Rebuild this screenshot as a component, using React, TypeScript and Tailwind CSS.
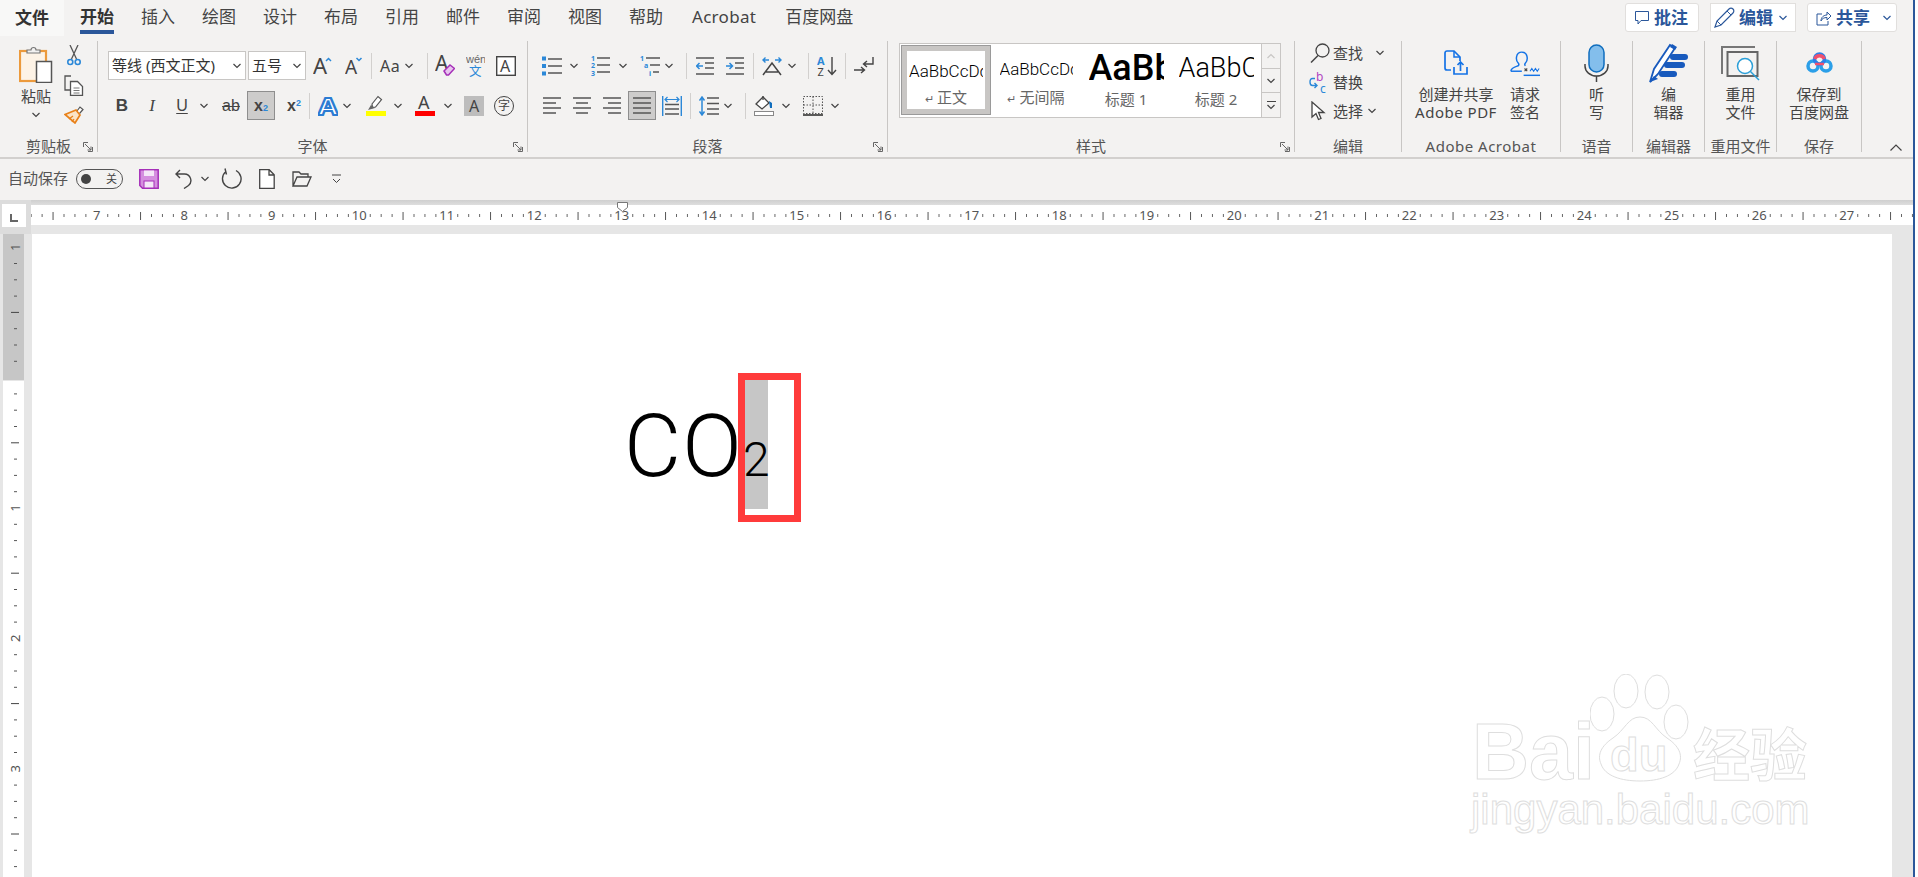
import type { ReactNode } from 'react';

const TEXT = '#444444';
const BLUE = '#2b88d8';
const GLYPH = "'Noto Sans','Noto Sans CJK SC',sans-serif";

// ---- small pieces ----

function Chev({ className = '', color = TEXT }: { className?: string; color?: string }) {
  return (
    <svg width="10" height="6" viewBox="0 0 10 6" className={`shrink-0 ${className}`}>
      <path d="M1.5 1l3.5 3.5L8.500 1" fill="none" stroke={color} strokeWidth="1.2" />
    </svg>
  );
}

function Sep({ className = '' }: { className?: string }) {
  return <div className={`h-[26px] w-px shrink-0 bg-[#d2d0ce] ${className}`} />;
}

function Launcher() {
  return (
    <svg width="10" height="10" viewBox="0 0 10 10" className="absolute bottom-[0px] right-[4px]">
      <path d="M9.500 5v4.500H5M.5 5V.5H5M2 2l6 6M8 4.500V8H4.500" fill="none" stroke="#666" strokeWidth="1" />
    </svg>
  );
}

function Group({ label, className, launcher, children }: { label: string; className: string; launcher?: boolean; children: ReactNode }) {
  return (
    <div className={`relative flex h-[111px] shrink-0 flex-col border-r border-[#c8c6c4] ${className}`}>
      <div className="h-[95px] shrink-0">{children}</div>
      <div className={`h-[20px] whitespace-nowrap text-center text-[15px] leading-[20px] text-[#555] ${label === 'Adobe Acrobat' ? 'tracking-[0.5px]' : ''}`}>{label}</div>
      {launcher && <Launcher />}
    </div>
  );
}

function Tab({ label, active, className = '', textClass = '' }: { label: string; active?: boolean; className?: string; textClass?: string }) {
  return (
    <div className={`flex h-[36px] flex-col px-[13.5px] ${className}`}>
      <div className={`h-[30px] pt-[3px] text-[17px] leading-[27px] ${active ? 'font-bold text-[#333]' : 'text-[#444]'} ${textClass}`}>{label}</div>
      <div className={`h-[4px] ${active ? 'bg-[#2b579a]' : ''}`} />
    </div>
  );
}

function Big({ icon, lines, className = '' }: { icon: ReactNode; lines: string[]; className?: string }) {
  return (
    <div className={`flex flex-col items-center ${className}`}>
      <div className="flex h-[44px] w-full items-center justify-center">{icon}</div>
      {lines.map((l) => (
        <div key={l} className={`whitespace-nowrap text-[15px] leading-[18px] text-[#444] ${l === 'Adobe PDF' ? 'tracking-[0.5px]' : ''}`}>{l}</div>
      ))}
    </div>
  );
}

function Lines({ x, w = 12 }: { x: number; w?: number }) {
  return <path d={`M${x} 3H${x + w}M${x} 10H${x + w}M${x} 17H${x + w}`} stroke="#555" strokeWidth="1.5" />;
}

function StyleItem({ sample, label, mark, className, sampleClass }: { sample: string; label: string; mark?: boolean; className: string; sampleClass: string }) {
  return (
    <div className={`flex shrink-0 flex-col items-center ${className}`}>
      <div className={`overflow-hidden whitespace-nowrap font-['Roboto',sans-serif] text-black ${sampleClass}`}>{sample}</div>
      <div className="mt-[3px] whitespace-nowrap text-[15px] leading-[20px] text-[#666]">
        {mark && <span className="mr-[3px] text-[11px]">↵</span>}
        {label}
      </div>
    </div>
  );
}

// ---- ribbon icons ----

const PasteIcon = () => (
  <svg width="34" height="38" viewBox="0 0 34 38">
    <rect x="1" y="6" width="26" height="30" fill="#fdf3e6" stroke="#ec9a3c" strokeWidth="2.200" />
    <path d="M8 8V5h4a2.500 2.500 0 0 1 5 0h4v3z" fill="#f3f2f1" stroke="#777" strokeWidth="1.200" />
    <rect x="17.500" y="16.500" width="15" height="21" fill="#fff" stroke="#555" strokeWidth="1.500" />
  </svg>
);
const ScissorsIcon = () => (
  <svg width="14" height="21" viewBox="0 0 14 21">
    <path d="M3 0l6.500 14M11 0L4.500 14" stroke="#555" strokeWidth="1.300" fill="none" />
    <circle cx="3.300" cy="17" r="2.500" fill="none" stroke="#2b88d8" strokeWidth="1.600" />
    <circle cx="10.700" cy="17" r="2.500" fill="none" stroke="#2b88d8" strokeWidth="1.600" />
  </svg>
);
const CopyIcon = () => (
  <svg width="20" height="21" viewBox="0 0 20 21">
    <path d="M7 1H1v14h5" fill="none" stroke="#555" strokeWidth="1.300" />
    <path d="M6.500 6.500h7l5 5v9h-12z" fill="#fff" stroke="#555" strokeWidth="1.300" />
    <path d="M9.500 13h6M9.500 15.500h6M9.500 18h6" stroke="#777" strokeWidth="1" />
  </svg>
);
const PainterIcon = () => (
  <svg width="21" height="19" viewBox="0 0 21 19">
    <path d="M13 6l3-4 3 2.500-3.500 4" fill="#fff" stroke="#555" strokeWidth="1.200" />
    <path d="M1 9.500L12 5l4 5-5 8z" fill="#fbe3c5" stroke="#e8811a" strokeWidth="1.700" />
    <path d="M5 14l4-3M8 17l2-3" stroke="#e8811a" strokeWidth="1.300" />
  </svg>
);
const GrowIcon = ({ up }: { up: boolean }) => (
  <svg width={up ? 20 : 18} height="20" viewBox={up ? '0 0 20 20' : '0 0 18 20'}>
    <text x="0" y="18" fontSize={up ? 22 : 19} fontFamily={GLYPH} fill="#444">A</text>
    <path d={up ? 'M13 5l2.500-2.500L18 5' : 'M11.500 2l2.500 2.500L16.500 2'} fill="none" stroke={BLUE} strokeWidth="1.500" />
  </svg>
);
const ClearIcon = () => (
  <svg width="20" height="23" viewBox="0 0 20 23">
    <text x="0" y="17" fontSize="21" fontFamily={GLYPH} fill="#444">A</text>
    <path d="M9 17l6-6 4.500 3.500-6 6.500h-2z" fill="#e7c4ee" stroke="#a52fb8" strokeWidth="1.500" />
  </svg>
);
const WenIcon = () => (
  <svg width="19" height="22" viewBox="0 0 19 22">
    <text x="0" y="8" fontSize="11" fontFamily="'Liberation Sans',sans-serif" fill="#666">wén</text>
    <text x="3" y="21" fontSize="12.500" fontFamily="'Noto Sans CJK SC',sans-serif" fill={BLUE}>文</text>
  </svg>
);
const BoxAIcon = () => (
  <svg width="20" height="20" viewBox="0 0 20 20">
    <rect x=".7" y=".7" width="18.600" height="18.600" fill="#fff" stroke="#444" strokeWidth="1.400" />
    <text x="4" y="16" fontSize="16" fontFamily={GLYPH} fill="#444">A</text>
  </svg>
);
const TextEffectIcon = () => (
  <svg width="20" height="20" viewBox="0 0 20 20">
    <text x="0" y="18.500" fontSize="24" fontWeight="700" fontFamily={GLYPH} fill="#fff" stroke="#2b7cd3" strokeWidth="2" textLength="20" lengthAdjust="spacingAndGlyphs">A</text>
  </svg>
);
const HighlightIcon = () => (
  <svg width="20" height="21" viewBox="0 0 20 21">
    <path d="M6 9l6-7.500 3.500 3-6 7.500-3 .5z" fill="#fff" stroke="#555" strokeWidth="1.200" />
    <path d="M2 15l3-5 4 3z" fill="#666" />
    <rect x="0" y="16" width="20" height="5" fill="#ffff00" />
  </svg>
);
const FontColorIcon = () => (
  <svg width="20" height="21" viewBox="0 0 20 21">
    <text x="3" y="14" fontSize="18" fontFamily={GLYPH} fill="#444">A</text>
    <rect x="0" y="16" width="20" height="5" fill="#ff0000" />
  </svg>
);
const BulletIcon = () => (
  <svg width="20" height="20" viewBox="0 0 20 20">
    <rect x="0" y="0.500" width="4" height="4" fill={BLUE} />
    <rect x="0" y="8" width="4" height="4" fill={BLUE} />
    <rect x="0" y="15.500" width="4" height="4" fill={BLUE} />
    <Lines x={6} w={14} />
  </svg>
);
const NumberIcon = () => (
  <svg width="19" height="21" viewBox="0 0 19 21">
    <text x="0" y="6" fontSize="7" fontWeight="700" fontFamily={GLYPH} fill={BLUE}>1</text>
    <text x="0" y="13" fontSize="7" fontWeight="700" fontFamily={GLYPH} fill={BLUE}>2</text>
    <text x="0" y="20.500" fontSize="7" fontWeight="700" fontFamily={GLYPH} fill={BLUE}>3</text>
    <Lines x={6} w={13} />
  </svg>
);
const MultiIcon = () => (
  <svg width="20" height="21" viewBox="0 0 20 21">
    <text x="0" y="6" fontSize="7" fontWeight="700" fontFamily={GLYPH} fill={BLUE}>1</text>
    <text x="4" y="13" fontSize="7" fontWeight="700" fontFamily={GLYPH} fill={BLUE}>a</text>
    <text x="9" y="20.500" fontSize="7" fontWeight="700" fontFamily={GLYPH} fill={BLUE}>i</text>
    <path d="M6 3h14M10 10h10M13 17h6" stroke="#555" strokeWidth="1.500" />
  </svg>
);
const IndentIcon = ({ inc }: { inc: boolean }) => (
  <svg width="18" height="20" viewBox="0 0 18 20">
    <path d="M0 2h18M9 7h9M9 12h9M0 18h18" stroke="#555" strokeWidth="1.500" />
    {inc ? (
      <path d="M0 10h6M3.500 7l3 3-3 3" fill="none" stroke={BLUE} strokeWidth="1.500" />
    ) : (
      <path d="M7 10H1M3.500 7l-3 3 3 3" fill="none" stroke={BLUE} strokeWidth="1.500" />
    )}
  </svg>
);
const DirectionIcon = () => (
  <svg width="20" height="20" viewBox="0 0 20 20">
    <path d="M1 4h6M3.500 1.500L1 4l2.500 2.500M13 4h6M16.500 1.500L19 4l-2.500 2.500" fill="none" stroke={BLUE} strokeWidth="1.400" />
    <path d="M1 19l9-12 9 12M4 16h12" fill="none" stroke="#444" strokeWidth="1.500" />
  </svg>
);
const SortIcon = () => (
  <svg width="20" height="20" viewBox="0 0 20 20">
    <text x="0" y="8.500" fontSize="11" fontWeight="700" fontFamily={GLYPH} fill={BLUE}>A</text>
    <text x="0.500" y="19.500" fontSize="11" fontFamily={GLYPH} fill="#444">Z</text>
    <path d="M15 1v17M11 14l4 4.500 4-4.500" fill="none" stroke="#444" strokeWidth="1.400" />
  </svg>
);
const MarksIcon = () => (
  <svg width="20" height="20" viewBox="0 0 20 20">
    <path d="M19 1v7H10M13 5l-3.500 3 3.500 3" fill="none" stroke="#444" strokeWidth="1.400" />
    <path d="M0 14h10M7 11l3.500 3L7 17" fill="none" stroke="#444" strokeWidth="1.400" />
  </svg>
);
const AlignIcon = ({ kind }: { kind: 'l' | 'c' | 'r' | 'j' }) => {
  const d = {
    l: 'M0 2h18M0 7h13M0 12h18M0 17h13',
    c: 'M0 2h18M3 7h12M0 12h18M3 17h12',
    r: 'M0 2h18M5 7h13M0 12h18M5 17h13',
    j: 'M0 2h18M0 7h18M0 12h18M0 17h18',
  }[kind];
  return (
    <svg width="18" height="19" viewBox="0 0 18 19">
      <path d={d} stroke="#555" strokeWidth="1.500" />
    </svg>
  );
};
const DistIcon = () => (
  <svg width="20" height="20" viewBox="0 0 20 20">
    <path d="M.7 0v20M19.300 0v20" stroke={BLUE} strokeWidth="1.400" />
    <path d="M3 3.500h14M5.500 1l-2.500 2.500L5.500 6M14.500 1L17 3.500 14.500 6" fill="none" stroke={BLUE} strokeWidth="1.200" />
    <path d="M3 8.500h14M3 13h14M3 18h14" stroke="#555" strokeWidth="1.500" />
  </svg>
);
const LineSpaceIcon = () => (
  <svg width="20" height="20" viewBox="0 0 20 20">
    <path d="M3 1v18M.5 4.500L3 1l2.500 3.500M.5 15.500L3 19l2.500-3.500" fill="none" stroke={BLUE} strokeWidth="1.500" />
    <path d="M8 2h12M8 7.500h12M8 13h12M8 18h12" stroke="#555" strokeWidth="1.500" />
  </svg>
);
const BucketIcon = () => (
  <svg width="20" height="21" viewBox="0 0 20 21">
    <path d="M2 9l7-7 6 6-7 6z" fill="#fff" stroke="#444" strokeWidth="1.300" />
    <path d="M9 5V1" stroke="#444" strokeWidth="1.300" />
    <path d="M15 6l3 2v5h-2z" fill="#106ebe" />
    <rect x=".5" y="16.500" width="19" height="4" fill="#fff" stroke="#888" />
  </svg>
);
const BorderIcon = () => (
  <svg width="20" height="20" viewBox="0 0 20 20">
    <path d="M.5.500h19v17H.5zM10 .5v17M.5 9h19" fill="none" stroke="#555" strokeDasharray="1.500 1.500" />
    <path d="M0 19h20" stroke="#333" strokeWidth="1.600" />
  </svg>
);
const FindIcon = () => (
  <svg width="20" height="20" viewBox="0 0 20 20">
    <circle cx="12.500" cy="7.500" r="6.500" fill="none" stroke="#444" strokeWidth="1.300" />
    <path d="M8 12.500L1 19.500" stroke="#444" strokeWidth="1.500" />
  </svg>
);
const ReplaceIcon = () => (
  <svg width="19" height="21" viewBox="0 0 19 21">
    <text x="7" y="9" fontSize="12" fontFamily={GLYPH} fill="#b146c2">b</text>
    <text x="11" y="20.500" fontSize="12" fontFamily={GLYPH} fill={BLUE}>c</text>
    <path d="M6 6.500H3.500Q1 6.500 1 10t2.500 3.500H8M5.500 11l2.500 2.500L5.500 16" fill="none" stroke={BLUE} strokeWidth="1.400" />
  </svg>
);
const PointerIcon = () => (
  <svg width="15" height="20" viewBox="0 0 15 20">
    <path d="M1 1v15l4-3.500 2.500 6 2.500-1-2.500-6H13z" fill="#fff" stroke="#444" strokeWidth="1.300" />
  </svg>
);
const PdfIcon = () => (
  <svg width="24" height="26" viewBox="0 0 24 26">
    <path d="M7 20H3a2 2 0 0 1-2-2V3a2 2 0 0 1 2-2h7l6 6v4" fill="none" stroke="#1473e6" strokeWidth="1.700" />
    <path d="M10 1v6h6" fill="none" stroke="#1473e6" strokeWidth="1.500" />
    <path d="M10 17v7h13v-7M16.500 21v-9M13.500 15l3-3 3 3" fill="none" stroke="#1473e6" strokeWidth="1.700" />
  </svg>
);
const SignIcon = () => (
  <svg width="33" height="29" viewBox="0 0 33 29">
    <path d="M1 23c0-4 5-5 8-6 1-1 1-2 0-3-3-3-3-12 4-12s7 9 4 12c-1 1-1 2 0 3" fill="none" stroke="#1473e6" strokeWidth="1.600" />
    <path d="M1 23h12" stroke="#1473e6" strokeWidth="1.600" />
    <path d="M16 20l3 3M19 20l-3 3" stroke="#444" strokeWidth="1.200" />
    <path d="M22 23l2-3 2 3 2-3 2 3 2-3" fill="none" stroke="#1473e6" strokeWidth="1.200" />
    <path d="M15 27.500h18" stroke="#1473e6" strokeWidth="1.600" />
  </svg>
);
const MicIcon = () => (
  <svg width="25" height="38" viewBox="0 0 25 38">
    <rect x="5" y="1" width="15" height="27" rx="7.500" fill="#83beec" stroke="#106ebe" strokeWidth="1.500" />
    <path d="M1 20v2a11.500 10 0 0 0 23 0v-2M12.500 32v6" fill="none" stroke="#444" strokeWidth="1.500" />
  </svg>
);
const EditorIcon = () => (
  <svg width="39" height="40" viewBox="0 0 39 40">
    <path d="M1 39l4-13L21 2l5 3-17 26z" fill="#fff" stroke="#185abd" strokeWidth="1.800" />
    <path d="M23 1l5 3-2 3-5-3z" fill="#185abd" />
    <path d="M1 39l4-6 4 3z" fill="#185abd" />
    <rect x="21" y="11" width="18" height="6" rx="3" fill="#185abd" />
    <rect x="15" y="19" width="21" height="6" rx="3" fill="#185abd" />
    <rect x="10" y="28" width="18" height="6" rx="3" fill="#185abd" />
  </svg>
);
const ReuseIcon = () => (
  <svg width="39" height="35" viewBox="0 0 39 35">
    <path d="M1 28V1h33" fill="none" stroke="#777" strokeWidth="2" />
    <rect x="6.500" y="6" width="30" height="24" fill="#f3f2f1" stroke="#666" strokeWidth="2" />
    <circle cx="24" cy="20" r="7.500" fill="#fff" stroke="#2b9fd8" strokeWidth="1.500" />
    <path d="M29.500 25.500L38 34" stroke="#2b9fd8" strokeWidth="1.500" />
  </svg>
);
const CloudIcon = () => (
  <svg width="27" height="22" viewBox="0 0 27 22">
    <circle cx="7" cy="14" r="5" fill="none" stroke="#2b9fe8" strokeWidth="3.500" />
    <circle cx="20" cy="14" r="5" fill="none" stroke="#2b9fe8" strokeWidth="3.500" />
    <circle cx="13.500" cy="7" r="5" fill="none" stroke="#2b7fe8" strokeWidth="3.500" />
    <path d="M8.800 7a5 5 0 0 1 9.400 0" fill="none" stroke="#f0506e" strokeWidth="3.500" />
    <path d="M9 12h9" stroke="#f0506e" strokeWidth="2.500" />
  </svg>
);

// ---- page chrome ----

const numX = (n: number) => 65.800 + (n - 7) * 87.500;

function HRuler() {
  const nums = Array.from({ length: 23 }, (_, i) => i + 6);
  return (
    <svg width="1882" height="20" viewBox="0 0 1882 20" className="block shrink-0">
      <rect width="1882" height="20" fill="#fff" />
      {nums.map((n) => (
        <g key={n}>
          {n > 6 && n < 28 && (
            <text x={numX(n)} y="15" fontSize="13" textAnchor="middle" fontFamily={GLYPH} fill="#555">{n}</text>
          )}
          <path d={`M${numX(n) + 43.750} 7v8`} stroke="#555" strokeWidth="1" />
          {[1, 2, 3, 5, 6, 7].map((k) => (
            <path key={k} d={`M${numX(n) + k * 10.940} 9v3`} stroke="#666" strokeWidth="1" />
          ))}
        </g>
      ))}
    </svg>
  );
}

function VRuler() {
  const nums = [-1, 0, 1, 2, 3, 4];
  const y = (n: number) => 143.600 + n * 130.400;
  return (
    <svg width="21" height="643" viewBox="0 0 21 643" className="block">
      <rect width="21" height="146" fill="#c6c6c6" />
      <rect y="147" width="21" height="496" fill="#fff" />
      {nums.map((n) => (
        <g key={n}>
          {n !== 0 && n <= 3 && (
            <text
              x="12"
              y={y(n)}
              fontSize="13"
              textAnchor="middle"
              dominantBaseline="central"
              fontFamily={GLYPH}
              fill="#555"
              transform={`rotate(-90 12 ${y(n)})`}
            >
              {Math.abs(n)}
            </text>
          )}
          <path d={`M8 ${y(n) + 65.200}h8`} stroke="#444" strokeWidth="1" />
          {[1, 2, 3, 5, 6, 7].map((k) => (
            <path key={k} d={`M11 ${y(n) + k * 16.300}h3`} stroke="#555" strokeWidth="1" />
          ))}
        </g>
      ))}
    </svg>
  );
}

function Watermark() {
  const stroke = "text-transparent [-webkit-text-stroke:1px_#dedede] font-['Liberation_Sans',sans-serif]";
  return (
    <div className="absolute left-[1441px] top-[674px] h-[190px] w-[350px] select-none">
      <svg width="100" height="115" viewBox="0 0 100 115" className="absolute left-[149px] top-0">
        <g fill="#fff" stroke="#dedede" strokeWidth="1">
          <ellipse cx="36" cy="17" rx="12" ry="17" />
          <ellipse cx="67" cy="18" rx="12" ry="17" />
          <ellipse cx="12" cy="40" rx="12" ry="17" />
          <ellipse cx="86" cy="48" rx="12" ry="17" />
          <path d="M50 43c12 0 15 13 27 21 12 8 16 17 12 26-4 12-20 17-39 17s-35-5-39-17c-4-9 0-18 12-26 12-8 15-21 27-21z" />
        </g>
      </svg>
      <div className={`absolute left-[31px] top-[38px] text-[79px] font-bold leading-[80px] ${stroke}`}>Bai</div>
      <div className={`absolute left-[169px] top-[56px] text-[47px] font-bold leading-[50px] ${stroke}`}>du</div>
      <div className="absolute left-[252px] top-[44px] whitespace-nowrap font-['Noto_Sans_CJK_SC',sans-serif] text-[57px] font-bold leading-[66px] text-transparent [-webkit-text-stroke:1px_#dedede]">经验</div>
      <div className={`absolute left-[30px] top-[111px] whitespace-nowrap text-[42px] leading-[50px] ${stroke}`}>jingyan.baidu.com</div>
    </div>
  );
}

export default function App() {
  return (
    <div className="relative flex h-[877px] w-[1918px] overflow-hidden bg-white font-['Noto_Sans','Noto_Sans_CJK_SC',sans-serif]">
      <div className="flex w-[1913px] shrink-0 flex-col">
        {/* Tabs */}
        <div className="flex h-[41px] shrink-0 items-start bg-[#f3f2f1]">
          <div className="flex h-[36px] w-[64px] items-center justify-center bg-[#f8f8f7] text-[17px] font-bold text-[#333]">文件</div>
          <div className="ml-[2.500px] flex">
            <Tab label="开始" active />
            {['插入', '绘图', '设计', '布局', '引用', '邮件', '审阅', '视图', '帮助'].map((t) => (
              <Tab key={t} label={t} />
            ))}
            <Tab label="Acrobat" className="ml-[2px]" textClass="tracking-[0.3px]" />
            <Tab label="百度网盘" className="ml-[2px]" />
          </div>
          <div className="ml-auto mr-[16px] mt-[3px] flex text-[17px] font-bold text-[#2b579a]">
            <div className="flex h-[29px] w-[74px] items-center rounded-[3px] border border-[#e1dfdd] bg-white pl-[9px]">
              <svg width="14" height="14" viewBox="0 0 14 14">
                <path d="M.5.500h13v9H6l-3 3.500V9.500H.5z" fill="none" stroke="#2b579a" strokeWidth="1" />
              </svg>
              <span className="ml-[5px]">批注</span>
            </div>
            <div className="ml-[11px] flex h-[29px] w-[86px] items-center border border-[#e1dfdd] bg-white pl-[3px]">
              <svg width="21" height="21" viewBox="0 0 21 21">
                <path d="M1 20l2-6L15 2a2 2 0 0 1 4 4L7 18z" fill="none" stroke="#2b579a" strokeWidth="1.200" />
                <path d="M13 4l4 4M3 14l4 4" stroke="#2b579a" strokeWidth="1" />
              </svg>
              <span className="ml-[4px]">编辑</span>
              <Chev className="ml-[5px]" color="#2b579a" />
            </div>
            <div className="ml-[11px] flex h-[29px] w-[90px] items-center rounded-[3px] border border-[#e1dfdd] bg-white pl-[8px]">
              <svg width="15" height="16" viewBox="0 0 15 16">
                <path d="M6 4H1v11h11v-4M5 11c0-4 3-6 6-6V2l4 4-4 4V7.500c-3 0-5 1-6 3.500z" fill="none" stroke="#2b579a" strokeWidth="1" />
              </svg>
              <span className="ml-[5px]">共享</span>
              <Chev className="ml-[12px]" color="#2b579a" />
            </div>
          </div>
        </div>

        {/* Ribbon */}
        <div className="flex h-[116px] shrink-0 items-start bg-[#f3f2f1]">
          <Group label="剪贴板" className="w-[98px]" launcher>
            <div className="flex pl-[19px] pt-[4px]">
              <div className="flex w-[34px] flex-col items-center">
                <PasteIcon />
                <div className="mt-[3px] text-[15px] leading-[20px] text-[#444]">粘贴</div>
                <Chev className="mt-[6px]" />
              </div>
              <div className="ml-[11px] flex flex-col items-start">
                <div className="ml-[3px]"><ScissorsIcon /></div>
                <div className="mt-[9px]"><CopyIcon /></div>
                <div className="mt-[9px]"><PainterIcon /></div>
              </div>
            </div>
          </Group>

          <Group label="字体" className="w-[430px]" launcher>
            <div className="mt-[10px] flex h-[29px] items-center">
              <div className="ml-[10px] flex h-[29px] w-[138px] items-center justify-between border border-[#c8c6c4] bg-white pl-[3px] pr-[3px] text-[15px] text-[#333]">
                <span className="whitespace-nowrap">等线 (西文正文)</span>
                <Chev />
              </div>
              <div className="ml-[2px] flex h-[29px] w-[58px] items-center justify-between border border-[#c8c6c4] bg-white pl-[3px] pr-[3px] text-[15px] text-[#333]">
                <span>五号</span>
                <Chev />
              </div>
              <div className="ml-[7px]"><GrowIcon up /></div>
              <div className="ml-[12px]"><GrowIcon up={false} /></div>
              <Sep className="ml-[8px]" />
              <span className="ml-[8px] w-[21px] whitespace-nowrap text-[16px] tracking-[0.5px] text-[#444]">Aa</span>
              <Chev className="ml-[3px]" />
              <Sep className="ml-[13px]" />
              <div className="ml-[7px]"><ClearIcon /></div>
              <div className="ml-[11px]"><WenIcon /></div>
              <div className="ml-[11px]"><BoxAIcon /></div>
            </div>
            <div className="mt-[11px] flex h-[29px] items-center">
              <span className="ml-[14px] w-[20px] text-center font-['Liberation_Sans',sans-serif] text-[17px] font-bold text-[#444]">B</span>
              <span className="ml-[10px] w-[20px] text-center font-['Liberation_Serif',serif] text-[17px] italic text-[#444]">I</span>
              <span className="ml-[10px] w-[20px] text-center font-['Liberation_Sans',sans-serif] text-[16px] text-[#444] underline underline-offset-2">U</span>
              <Chev className="ml-[7px]" />
              <span className="ml-[12px] w-[20px] text-center font-['Liberation_Sans',sans-serif] text-[16px] text-[#444] line-through">ab</span>
              <div className="ml-[6px] flex h-[29px] w-[28px] items-center justify-center border-[1.500px] border-[#8e8e8e] bg-[#cdcccb] font-['Liberation_Sans',sans-serif] text-[16px] font-bold text-[#444]">
                x<sub className="text-[9px] text-[#2b88d8]">2</sub>
              </div>
              <div className="ml-[9px] w-[20px] text-center font-['Liberation_Sans',sans-serif] text-[16px] font-bold text-[#444]">
                x<sup className="text-[9px] text-[#2b88d8]">2</sup>
              </div>
              <Sep className="ml-[5px]" />
              <div className="ml-[8px]"><TextEffectIcon /></div>
              <Chev className="ml-[4px]" />
              <div className="ml-[14px]"><HighlightIcon /></div>
              <Chev className="ml-[7px]" />
              <div className="ml-[12px]"><FontColorIcon /></div>
              <Chev className="ml-[8px]" />
              <div className="ml-[11px] flex h-[20px] w-[20px] items-center justify-center bg-[#bdbdbd] text-[16px] text-[#444]">A</div>
              <div className="ml-[10px] flex h-[20px] w-[20px] items-center justify-center rounded-full border-[1.300px] border-[#444] text-[12px] text-[#444]">字</div>
            </div>
          </Group>

          <Group label="段落" className="w-[360px]" launcher>
            <div className="mt-[10px] flex h-[29px] items-center">
              <div className="ml-[14px]"><BulletIcon /></div>
              <Chev className="ml-[7px]" />
              <div className="ml-[12px]"><NumberIcon /></div>
              <Chev className="ml-[8px]" />
              <div className="ml-[12px]"><MultiIcon /></div>
              <Chev className="ml-[4px]" />
              <Sep className="ml-[12px]" />
              <div className="ml-[9px]"><IndentIcon inc={false} /></div>
              <div className="ml-[12px]"><IndentIcon inc /></div>
              <Sep className="ml-[9px]" />
              <div className="ml-[8px]"><DirectionIcon /></div>
              <Chev className="ml-[5px]" />
              <Sep className="ml-[11px]" />
              <div className="ml-[8px]"><SortIcon /></div>
              <Sep className="ml-[8px]" />
              <div className="ml-[8px]"><MarksIcon /></div>
            </div>
            <div className="mt-[11px] flex h-[29px] items-center">
              <div className="ml-[15px]"><AlignIcon kind="l" /></div>
              <div className="ml-[12px]"><AlignIcon kind="c" /></div>
              <div className="ml-[12px]"><AlignIcon kind="r" /></div>
              <div className="ml-[7px] flex h-[29px] w-[28px] items-center justify-center border-[1.500px] border-[#8e8e8e] bg-[#cdcccb]"><AlignIcon kind="j" /></div>
              <div className="ml-[6px]"><DistIcon /></div>
              <Sep className="ml-[8px]" />
              <div className="ml-[8px]"><LineSpaceIcon /></div>
              <Chev className="ml-[4px]" />
              <Sep className="ml-[12px]" />
              <div className="ml-[8px]"><BucketIcon /></div>
              <Chev className="ml-[7px]" />
              <div className="ml-[12px]"><BorderIcon /></div>
              <Chev className="ml-[7px]" />
            </div>
          </Group>

          <Group label="样式" className="w-[407px]" launcher>
            <div className="ml-[11px] mt-[2px] flex h-[75px] w-[382px] border border-[#c8c6c4] bg-white pl-px">
              <div className="flex items-center">
                <div className="ml-[1px] mt-[-1px] flex h-[68px] w-[88px] flex-col items-center overflow-hidden border-[5px] border-[#c8c6c4] ring-1 ring-[#9a9a9a]">
                  <div className="mt-[7px] h-[34px] w-[74px] overflow-hidden whitespace-nowrap font-['Roboto',sans-serif] text-[17px] font-light leading-[26px] text-black">AaBbCcDd</div>
                  <div className="mt-[-1px] whitespace-nowrap text-[15px] leading-[20px] text-[#666]"><span className="mr-[3px] text-[11px]">↵</span>正文</div>
                </div>
              </div>
              <StyleItem className="ml-[1px] w-[90px] pt-[12px]" sampleClass="h-[28px] w-[73px] text-[17px] font-light leading-[26px]" sample="AaBbCcDd" label="无间隔" mark />
              <StyleItem className="w-[90px] pt-[3px]" sampleClass="h-[39px] w-[75px] text-[36px] font-medium leading-[42px]" sample="AaBbCc" label="标题 1" />
              <StyleItem className="w-[90px] pt-[3px]" sampleClass="h-[39px] w-[75px] text-[27px] font-light leading-[42px]" sample="AaBbCc" label="标题 2" />
              <div className="ml-auto flex w-[19px] shrink-0 flex-col border-l border-[#c8c6c4] bg-[#f3f2f1]">
                <div className="flex h-[25px] items-center justify-center border-b border-[#c8c6c4]"><Chev color="#c8c6c4" className="rotate-180" /></div>
                <div className="flex h-[24px] items-center justify-center border-b border-[#c8c6c4]"><Chev /></div>
                <div className="flex h-[24px] flex-col items-center justify-center gap-[2px]">
                  <div className="h-px w-[9px] bg-[#444]" />
                  <Chev />
                </div>
              </div>
            </div>
          </Group>

          <Group label="编辑" className="w-[107px]">
            <div className="flex h-[24px] items-center text-[15px] text-[#444]">
              <div className="ml-[15px]"><FindIcon /></div>
              <span className="ml-[3px]">查找</span>
              <Chev className="ml-[12px]" />
            </div>
            <div className="mt-[5px] flex h-[24px] items-center text-[15px] text-[#444]">
              <div className="ml-[14px]"><ReplaceIcon /></div>
              <span className="ml-[5px]">替换</span>
            </div>
            <div className="mt-[5px] flex h-[24px] items-center text-[15px] text-[#444]">
              <div className="ml-[16px]"><PointerIcon /></div>
              <span className="ml-[7px]">选择</span>
              <Chev className="ml-[4px]" />
            </div>
          </Group>

          <Group label="Adobe Acrobat" className="w-[159px]">
            <div className="flex">
              <Big className="w-[108px]" icon={<PdfIcon />} lines={['创建并共享', 'Adobe PDF']} />
              <Big className="w-[30px]" icon={<SignIcon />} lines={['请求', '签名']} />
            </div>
          </Group>
          <Group label="语音" className="w-[72px]">
            <Big icon={<MicIcon />} lines={['听', '写']} />
          </Group>
          <Group label="编辑器" className="w-[72px]">
            <Big icon={<EditorIcon />} lines={['编', '辑器']} />
          </Group>
          <Group label="重用文件" className="w-[72px]">
            <Big icon={<ReuseIcon />} lines={['重用', '文件']} />
          </Group>
          <Group label="保存" className="w-[85px]">
            <Big icon={<CloudIcon />} lines={['保存到', '百度网盘']} />
          </Group>
          <div className="flex h-[111px] flex-1 items-end justify-end pb-[1px] pr-[11px]">
            <svg width="12" height="7" viewBox="0 0 12 7">
              <path d="M.5 6.500L6 1l5.500 5.500" fill="none" stroke="#444" strokeWidth="1.200" />
            </svg>
          </div>
        </div>

        {/* Quick access */}
        <div className="flex h-[43px] shrink-0 items-center border-t-2 border-[#d2d0ce] bg-[#f3f2f1] pb-[2px] pl-[8px]">
          <span className="w-[60px] whitespace-nowrap text-[15px] text-[#555]">自动保存</span>
          <div className="ml-[8px] flex h-[20px] w-[47px] items-center justify-between rounded-full border border-[#555] pl-[4px] pr-[5px]">
            <div className="h-[10px] w-[10px] rounded-full bg-[#444]" />
            <span className="text-[11px] leading-none text-[#444]">关</span>
          </div>
          <svg width="20" height="20" viewBox="0 0 20 20" className="ml-[16px]">
            <path d="M.8.800h18.400v18.400H3.500L.8 16.500z" fill="#d58fdf" stroke="#a52fb8" strokeWidth="1.500" />
            <rect x="5" y="1.500" width="10" height="5.500" fill="#f5e6f8" />
            <rect x="5" y="12" width="10" height="7" fill="#f5e6f8" stroke="#a52fb8" strokeWidth="1" />
          </svg>
          <svg width="18" height="20" viewBox="0 0 18 20" className="ml-[16px]">
            <path d="M1 5h8.500a6.500 6.500 0 0 1 4 11.500L9 19.500M5 1L1 5l4 4" fill="none" stroke="#444" strokeWidth="1.400" />
          </svg>
          <Chev className="ml-[7px]" />
          <svg width="21" height="21" viewBox="0 0 21 21" className="ml-[11px]">
            <path d="M5 3.500A9.300 9.300 0 1 0 15 2.500M4 .5l1.500 6" fill="none" stroke="#444" strokeWidth="1.400" />
          </svg>
          <svg width="16" height="20" viewBox="0 0 16 20" className="ml-[17px]">
            <path d="M.7.700h9.500l5 5v13.600H.7zM10 .7v5.300h5.300" fill="#fff" stroke="#444" strokeWidth="1.300" />
          </svg>
          <svg width="20" height="16" viewBox="0 0 20 16" className="ml-[17px]">
            <path d="M1 15V1h6l2 2h7v3M1 15l4-9h14l-4 9z" fill="none" stroke="#444" strokeWidth="1.300" />
          </svg>
          <svg width="9" height="10" viewBox="0 0 9 10" className="ml-[20px]">
            <path d="M0 1h9M1 5l3.500 3.500L8 5" fill="none" stroke="#444" strokeWidth="1" />
          </svg>
        </div>

        {/* Horizontal ruler */}
        <div className="relative flex h-[34px] shrink-0 bg-[#e6e6e6]">
          <div className="flex h-full w-[31px] shrink-0 flex-col bg-[#dcdcdc]">
            <div className="ml-[2px] mt-[4px] flex h-[23px] w-[24px] items-end justify-center bg-white pb-[5px]">
              <svg width="8" height="8" viewBox="0 0 8 8">
                <path d="M1 0v7h7" fill="none" stroke="#666" strokeWidth="2" />
              </svg>
            </div>
          </div>
          <div className="flex flex-col">
            <div className="h-[5px] bg-gradient-to-b from-[#cfcfcf] to-[#dedede]" />
            <HRuler />
          </div>
          <svg width="12" height="10" viewBox="0 0 12 10" className="absolute left-[617px] top-[2px]">
            <path d="M.5.500h10v5L5.500 9.500.5 5.500z" fill="#fff" stroke="#777" strokeWidth="1" />
          </svg>
        </div>

        {/* Document area */}
        <div className="flex min-h-0 flex-1 bg-[#e6e6e6]">
          <div className="w-[32px] shrink-0 pl-[3px]">
            <VRuler />
          </div>
          <div className="flex w-[1860px] shrink-0 items-start bg-white pl-[592px]">
            <div className="mt-[167px] h-[90px] w-[121px] shrink-0 font-['Roboto',sans-serif] text-[88px] font-light leading-[90px] tracking-[1px] text-black">CO</div>
            <div className="relative mt-[146px] h-[129px] w-[23px] shrink-0 bg-[#c6c6c6] text-center font-['Roboto',sans-serif] text-[48px] font-light leading-[50px] text-black">
              <span className="absolute left-[-2px] top-[55px] w-[23px]">2</span>
            </div>
          </div>
        </div>
      </div>
      <div className="w-[2px] shrink-0 bg-[#2b579a]" />

      {/* Annotation and watermark */}
      <div className="absolute left-[738px] top-[373px] h-[149px] w-[63px] border-[7px] border-[#ff3b3b]" />
      <Watermark />
    </div>
  );
}
